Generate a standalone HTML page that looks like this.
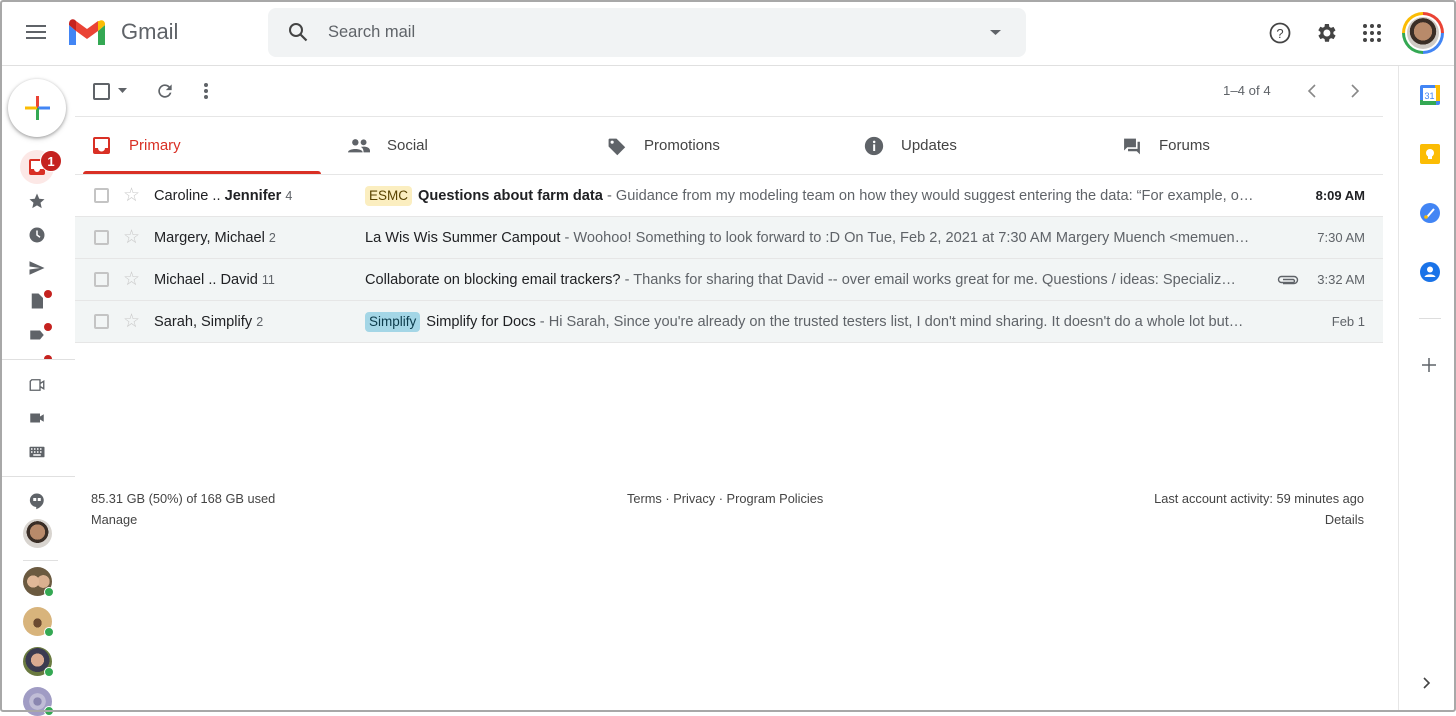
<!DOCTYPE html>
<html><head><meta charset="utf-8"><style>
*{box-sizing:border-box;margin:0;padding:0}
body{width:1456px;height:712px;overflow:hidden;background:#fff;font-family:"Liberation Sans",Arial,sans-serif;color:#202124;position:relative}
.frame{position:absolute;inset:0;border:2px solid #a8a8a8;border-radius:3px;pointer-events:none;z-index:10}
.abs{position:absolute}
.hdr{position:absolute;left:0;top:0;width:1456px;height:66px;border-bottom:1px solid #e0e0e0}
.search{position:absolute;left:268px;top:8px;width:758px;height:49px;background:#f1f3f4;border-radius:8px}
.row{position:absolute;left:75px;width:1308px;height:42px;border-bottom:1px solid #e6e6e6;font-size:14.6px;line-height:42px}
.row.g{background:#f2f5f5}
.cb{position:absolute;left:19px;top:13px;width:15px;height:15px;border:2px solid #c4c4c4;border-radius:2px}
.st{position:absolute;left:48px;top:0;color:#c8c8c8;font-size:19px}
.snd{position:absolute;left:79px;top:0}
.sub{position:absolute;left:290px;top:0;width:975px;white-space:nowrap;overflow:hidden;text-overflow:ellipsis}
.sub .p{color:#5f6368}
.cnt{color:#5f6368;font-size:12.5px}
.tm{position:absolute;right:18px;top:0;font-size:13px;color:#5f6368}
.lbl{display:inline-block;padding:0 4px;border-radius:4px;line-height:20px;font-size:13.5px;margin-right:6px}
.tab{position:absolute;top:116px;height:58px;line-height:60px;font-size:15px;color:#444}
.si{position:absolute;left:28px;width:18px;height:18px}
.foot{position:absolute;font-size:12.8px;color:#444;top:488px;line-height:21px}
.av{position:absolute;left:23px;width:29px;height:29px;border-radius:50%}
.dot{position:absolute;width:10px;height:10px;border-radius:50%;background:#34a853;border:1px solid #fff}
</style></head><body>
<div class="frame"></div>
<div class="hdr">
 <svg class="abs" style="left:26px;top:23px" width="22" height="18"><g fill="#5f6368"><rect y="2" width="20" height="2"/><rect y="8" width="20" height="2"/><rect y="14" width="20" height="2"/></g></svg>
 <svg class="abs" style="left:67px;top:19px" width="40" height="28" viewBox="0 0 40 28"><path d="M2 6v20h7V12z" fill="#4285f4"/><path d="M31 12v14h7V6z" fill="#34a853"/><path d="M31 2v10l7-6V5c0-3-3-5-6-3z" fill="#fbbc04"/><path d="M9 12V2l11 8 11-8v10l-11 8z" fill="#ea4335"/><path d="M2 5v1l7 6V2L8 1C5-1 2 1 2 5z" fill="#c5221f"/></svg>
 <div class="abs" style="left:121px;top:19px;font-size:22px;color:#5f6368">Gmail</div>
 <div class="search">
  <svg class="abs" style="left:20px;top:14px" width="22" height="22"><circle cx="8" cy="8" r="6" fill="none" stroke="#444" stroke-width="2"/><path d="M12.5 12.5l6 6" stroke="#444" stroke-width="2.2"/></svg>
  <div class="abs" style="left:60px;top:15px;font-size:16.5px;color:#5f6368">Search mail</div>
  <svg class="abs" style="left:722px;top:21px" width="12" height="8"><path d="M0 1h11l-5.5 5z" fill="#5f6368"/></svg>
 </div>
 <svg class="abs" style="left:1268px;top:21px" width="24" height="24"><circle cx="12" cy="12" r="9.5" fill="none" stroke="#444" stroke-width="1.8"/><text x="12" y="17" text-anchor="middle" font-size="13" font-family="Liberation Sans" fill="#444">?</text></svg>
 <svg class="abs" style="left:1314px;top:21px" width="24" height="24" viewBox="0 0 24 24"><path fill="#444" d="M19.4 13a7.5 7.5 0 000-2l2.1-1.6-2-3.5-2.5 1a7 7 0 00-1.7-1L14.9 3h-4l-.4 2.7a7 7 0 00-1.7 1l-2.5-1-2 3.5L6.5 11a7.5 7.5 0 000 2l-2.1 1.6 2 3.5 2.5-1a7 7 0 001.7 1l.4 2.7h4l.4-2.7a7 7 0 001.7-1l2.5 1 2-3.5zM12.9 15.5a3.5 3.5 0 110-7 3.5 3.5 0 010 7z"/></svg>
 <svg class="abs" style="left:1362px;top:23px" width="20" height="20"><g fill="#444"><circle cx="3" cy="3" r="2"/><circle cx="10" cy="3" r="2"/><circle cx="17" cy="3" r="2"/><circle cx="3" cy="10" r="2"/><circle cx="10" cy="10" r="2"/><circle cx="17" cy="10" r="2"/><circle cx="3" cy="17" r="2"/><circle cx="10" cy="17" r="2"/><circle cx="17" cy="17" r="2"/></g></svg>
 <div class="abs" style="left:1402px;top:12px;width:42px;height:42px;border-radius:50%;background:conic-gradient(#ea4335 0 25%,#4285f4 25% 50%,#34a853 50% 75%,#fbbc04 75%)"><div style="margin:3px;width:36px;height:36px;border-radius:50%;background:#fff;padding:2px"><div style="width:32px;height:32px;border-radius:50%;background:radial-gradient(circle at 50% 45%,#b88a6a 0 38%,#3a2e26 39% 55%,#cfcac4 56%)"></div></div></div>
</div>

<div class="abs" style="left:8px;top:79px;width:58px;height:58px;border-radius:50%;box-shadow:0 1px 3px rgba(0,0,0,.3),0 2px 6px rgba(0,0,0,.15);background:#fff">
 <svg class="abs" style="left:16px;top:16px" width="26" height="26"><rect x="12" y="1" width="3" height="12" fill="#ea4335"/><rect x="14" y="11.5" width="12" height="3" fill="#4285f4"/><rect x="12" y="13" width="3" height="12" fill="#34a853"/><rect x="1" y="11.5" width="12" height="3" fill="#fbbc04"/></svg>
</div>
<div class="abs" style="left:20px;top:150px;width:34px;height:34px;border-radius:50%;background:#fce8e6"></div>
<svg class="abs" style="left:28px;top:158px" width="18" height="18"><rect x="1" y="1" width="16" height="16" rx="2" fill="#d93025"/><path d="M3 3h12v8h-3a3 3 0 01-6 0H3z" fill="#fff"/></svg>
<div class="abs" style="left:40px;top:150px;width:22px;height:22px;border-radius:50%;background:#c5221f;color:#fff;font-size:13px;font-weight:bold;text-align:center;line-height:21px;border:1px solid #fff">1</div>
<svg class="si" style="top:192px" viewBox="0 0 24 24"><path fill="#5f6368" d="M12 2l3 7 7 .6-5.3 4.7 1.6 7.2L12 17.8 5.7 21.5l1.6-7.2L2 9.6 9 9z"/></svg>
<svg class="si" style="top:226px" viewBox="0 0 24 24"><circle cx="12" cy="12" r="10" fill="#5f6368"/><path d="M12 6v6l4 3" stroke="#fff" stroke-width="2" fill="none"/></svg>
<svg class="si" style="top:259px" viewBox="0 0 24 24"><path fill="#5f6368" d="M2 3l20 9-20 9v-7l14-2-14-2z"/></svg>
<svg class="si" style="top:292px" viewBox="0 0 24 24"><path fill="#5f6368" d="M5 2h9l6 6v14H5z"/></svg>
<div class="abs" style="left:44px;top:290px;width:8px;height:8px;border-radius:50%;background:#c5221f"></div>
<svg class="si" style="top:326px" viewBox="0 0 24 24"><path fill="#5f6368" d="M3 6h13l5 6-5 6H3z"/></svg>
<div class="abs" style="left:44px;top:323px;width:8px;height:8px;border-radius:50%;background:#c5221f"></div>
<div class="abs" style="left:44px;top:355px;width:8px;height:4px;border-radius:4px 4px 0 0;background:#c5221f"></div>
<div class="abs" style="left:0;top:359px;width:75px;height:1px;background:#e0e0e0"></div>
<svg class="si" style="top:376px" viewBox="0 0 24 24"><path fill="none" stroke="#5f6368" stroke-width="1.8" d="M5 5h11v14H3V7zM16 10l5-3v10l-5-3"/></svg>
<svg class="si" style="top:409px" viewBox="0 0 24 24"><path fill="#5f6368" d="M3 6h13v12H3zM16 10l5-3v10l-5-3z"/></svg>
<svg class="si" style="top:443px" viewBox="0 0 24 24"><rect x="2" y="5" width="20" height="14" rx="1" fill="#5f6368"/><g fill="#fff"><rect x="4" y="7" width="2" height="2"/><rect x="8" y="7" width="2" height="2"/><rect x="12" y="7" width="2" height="2"/><rect x="16" y="7" width="2" height="2"/><rect x="4" y="11" width="2" height="2"/><rect x="8" y="11" width="2" height="2"/><rect x="12" y="11" width="2" height="2"/><rect x="16" y="11" width="2" height="2"/><rect x="7" y="15" width="10" height="2"/></g></svg>
<div class="abs" style="left:0;top:476px;width:75px;height:1px;background:#e0e0e0"></div>
<svg class="si" style="top:492px" viewBox="0 0 24 24"><path fill="#5f6368" d="M12 2a9 9 0 00-1 18v3c5-2 10-6 10-12a9 9 0 00-9-9z"/><g fill="#fff"><rect x="7" y="8" width="4" height="4"/><rect x="13" y="8" width="4" height="4"/></g></svg>
<div class="av" style="top:519px;background:radial-gradient(circle at 50% 45%,#b88a6a 0 35%,#3a2e26 36% 50%,#d8d4cf 51%)"></div>
<div class="abs" style="left:23px;top:560px;width:35px;height:1px;background:#e0e0e0"></div>
<div class="av" style="top:567px;background:radial-gradient(circle at 35% 50%,#e0b898 0 25%,transparent 26%),radial-gradient(circle at 70% 50%,#d9b090 0 25%,#6b5a40 26%)"></div><div class="dot" style="left:44px;top:587px"></div>
<div class="av" style="top:607px;background:radial-gradient(ellipse at 50% 55%,#6b4a30 0 20%,#d8b47c 21%)"></div><div class="dot" style="left:44px;top:627px"></div>
<div class="av" style="top:647px;background:radial-gradient(circle at 50% 45%,#d9aa90 0 30%,#3a3a50 31% 55%,#6a7a40 56%)"></div><div class="dot" style="left:44px;top:667px"></div>
<div class="av" style="top:687px;background:radial-gradient(circle,#8a86b0 0 20%,#c0bdd6 21% 40%,#a09cc4 41%)"></div><div class="dot" style="left:44px;top:706px"></div>

<div class="abs" style="left:93px;top:83px;width:17px;height:17px;border:2px solid #5f6368;border-radius:2px"></div>
<svg class="abs" style="left:118px;top:88px" width="10" height="6"><path d="M0 0h9l-4.5 5z" fill="#5f6368"/></svg>
<svg class="abs" style="left:155px;top:81px" width="20" height="20" viewBox="0 0 24 24"><path fill="#5f6368" d="M17.6 6.4A8 8 0 1019.7 14h-2.1a6 6 0 11-1.4-6.2L13 11h7V4z"/></svg>
<svg class="abs" style="left:203px;top:82px" width="6" height="18"><g fill="#5f6368"><circle cx="3" cy="3" r="2"/><circle cx="3" cy="9" r="2"/><circle cx="3" cy="15" r="2"/></g></svg>
<div class="abs" style="left:1223px;top:83px;font-size:13.2px;color:#5f6368">1–4 of 4</div>
<svg class="abs" style="left:1307px;top:84px" width="10" height="14"><path d="M8 1L2 7l6 6" stroke="#888" stroke-width="1.6" fill="none"/></svg>
<svg class="abs" style="left:1350px;top:84px" width="10" height="14"><path d="M2 1l6 6-6 6" stroke="#888" stroke-width="1.6" fill="none"/></svg>
<div class="abs" style="left:75px;top:116px;width:1308px;height:1px;background:#e6e6e6"></div>

<svg class="abs" style="left:92px;top:136px" width="19" height="19"><rect x="1" y="1" width="17" height="17" rx="2" fill="#d93025"/><path d="M3 3h13v9h-3a3.5 3.5 0 01-7 0H3z" fill="#fff"/></svg>
<div class="tab" style="left:129px;color:#d93025">Primary</div>
<div class="abs" style="left:83px;top:171px;width:238px;height:3px;background:#d93025;border-radius:3px 3px 0 0"></div>
<svg class="abs" style="left:348px;top:138px" width="22" height="16" viewBox="0 0 24 16"><g fill="#5f6368"><circle cx="8" cy="4" r="3.5"/><circle cx="17" cy="4" r="3.2"/><path d="M0 15c0-5 16-5 16 0zM14 9c4-1 10 0 10 4v2h-7c0-3-1-5-3-6z"/></g></svg>
<div class="tab" style="left:387px">Social</div>
<svg class="abs" style="left:607px;top:137px" width="19" height="19" viewBox="0 0 24 24"><path fill="#5f6368" d="M2 3v9l11 11 10-10L12 2H3zM6.5 8.5a2 2 0 110-4 2 2 0 010 4z"/></svg>
<div class="tab" style="left:644px">Promotions</div>
<svg class="abs" style="left:864px;top:136px" width="20" height="20" viewBox="0 0 24 24"><circle cx="12" cy="12" r="11" fill="#5f6368"/><rect x="11" y="10" width="2.4" height="8" fill="#fff"/><circle cx="12.2" cy="7" r="1.5" fill="#fff"/></svg>
<div class="tab" style="left:901px">Updates</div>
<svg class="abs" style="left:1122px;top:137px" width="20" height="19" viewBox="0 0 24 24"><path fill="#5f6368" d="M2 2h15v11H6l-4 4zM19 6h3v16l-4-4H7v-3h12z"/></svg>
<div class="tab" style="left:1159px">Forums</div>
<div class="abs" style="left:75px;top:174px;width:1308px;height:1px;background:#e6e6e6"></div>

<div class="row" style="top:175px"><div class="cb"></div><div class="st">☆</div><div class="snd">Caroline .. <b>Jennifer</b> <span class="cnt">4</span></div><div class="sub"><span class="lbl" style="background:#fbeec0;color:#594300">ESMC</span><b>Questions about farm data</b><span class="p"> - Guidance from my modeling team on how they would suggest entering the data: “For example, o…</span></div><div class="tm" style="color:#202124;font-weight:bold">8:09 AM</div></div>
<div class="row g" style="top:217px"><div class="cb"></div><div class="st">☆</div><div class="snd">Margery, Michael <span class="cnt">2</span></div><div class="sub">La Wis Wis Summer Campout<span class="p"> - Woohoo! Something to look forward to :D On Tue, Feb 2, 2021 at 7:30 AM Margery Muench &lt;memuen…</span></div><div class="tm">7:30 AM</div></div>
<div class="row g" style="top:259px"><div class="cb"></div><div class="st">☆</div><div class="snd">Michael .. David <span class="cnt">11</span></div><div class="sub" style="width:972px">Collaborate on blocking email trackers?<span class="p"> - Thanks for sharing that David -- over email works great for me. Questions / ideas: Specializ…</span></div>
<svg class="abs" style="left:1202px;top:16px" width="22" height="10" viewBox="0 0 22 10"><path d="M6 8.5h11a3.5 3.5 0 000-7H4.5a3 3 0 000 6H16a1.5 1.5 0 000-3H6" fill="none" stroke="#5f6368" stroke-width="1.4"/></svg><div class="tm">3:32 AM</div></div>
<div class="row g" style="top:301px"><div class="cb"></div><div class="st">☆</div><div class="snd">Sarah, Simplify <span class="cnt">2</span></div><div class="sub"><span class="lbl" style="background:#a4d6e6;color:#0b3a4a">Simplify</span>Simplify for Docs<span class="p"> - Hi Sarah, Since you're already on the trusted testers list, I don't mind sharing. It doesn't do a whole lot but…</span></div><div class="tm">Feb 1</div></div>

<div class="foot" style="left:91px">85.31 GB (50%) of 168 GB used<br>Manage</div>
<div class="foot" style="left:627px">Terms · Privacy · Program Policies</div>
<div class="foot" style="right:92px;text-align:right">Last account activity: 59 minutes ago<br>Details</div>

<div class="abs" style="left:1398px;top:66px;width:1px;height:646px;background:#e6e6e6"></div>
<svg class="abs" style="left:1420px;top:85px" width="20" height="21" viewBox="0 0 20 21"><rect x="0" y="0" width="20" height="20" rx="2" fill="#4285f4"/><rect x="15" y="0" width="5" height="16" fill="#fbbc04"/><rect x="0" y="15" width="16" height="5" fill="#34a853"/><rect x="3" y="3" width="13" height="13" fill="#fff"/><text x="9.5" y="14" text-anchor="middle" font-size="9" fill="#4285f4" font-family="Liberation Sans">31</text></svg>
<svg class="abs" style="left:1420px;top:144px" width="20" height="20"><rect width="20" height="20" rx="2" fill="#fbbc04"/><circle cx="10" cy="9" r="4" fill="#fff"/><rect x="8" y="12" width="4" height="3" fill="#fff"/></svg>
<svg class="abs" style="left:1420px;top:203px" width="20" height="20"><circle cx="10" cy="10" r="10" fill="#4285f4"/><path d="M7 14l7-8" stroke="#fff" stroke-width="2"/><circle cx="6" cy="14" r="1.8" fill="#fbbc04"/></svg>
<svg class="abs" style="left:1420px;top:262px" width="20" height="20"><circle cx="10" cy="10" r="10" fill="#1a73e8"/><circle cx="10" cy="7.5" r="3" fill="#fff"/><path d="M4.5 15c1-3.5 10-3.5 11 0z" fill="#fff"/></svg>
<div class="abs" style="left:1419px;top:318px;width:22px;height:1px;background:#ddd"></div>
<svg class="abs" style="left:1422px;top:358px" width="14" height="14"><path d="M7 0v14M0 7h14" stroke="#5f6368" stroke-width="1.5"/></svg>
<svg class="abs" style="left:1423px;top:677px" width="8" height="12"><path d="M1 1l5 5-5 5" stroke="#444" stroke-width="1.6" fill="none"/></svg>
</body></html>
